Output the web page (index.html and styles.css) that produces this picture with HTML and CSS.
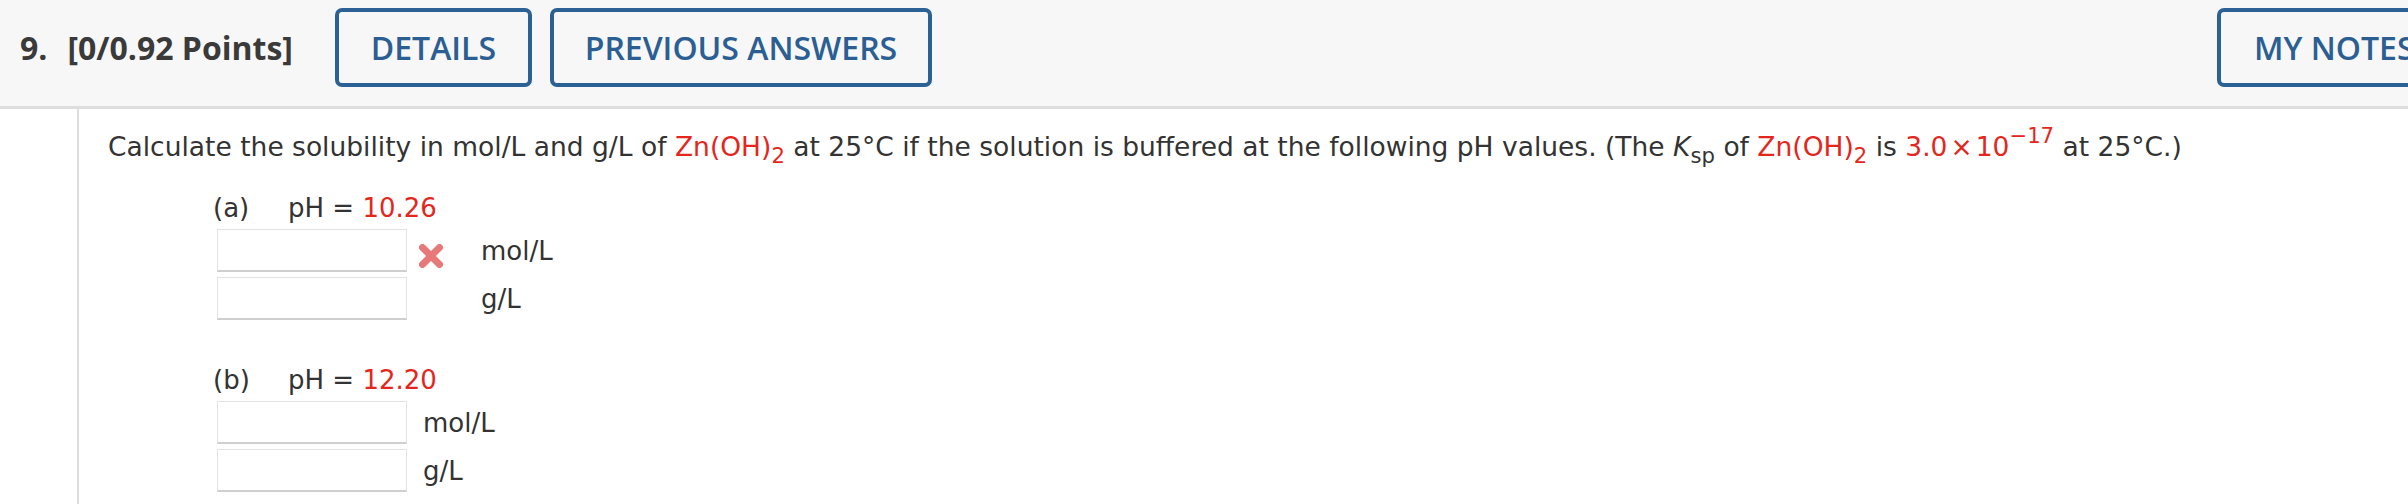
FILE: index.html
```html
<!DOCTYPE html>
<html>
<head>
<meta charset="utf-8">
<link rel="stylesheet" href="styles.css">
</head>
<body>
<header class="qhead">
  <span class="qnum">9.</span>
  <span class="pts">[0/0.92 Points]</span>
  <button class="btn btn-details">DETAILS</button>
  <button class="btn btn-prev">PREVIOUS ANSWERS</button>
  <span class="spacer"></span>
  <button class="btn btn-notes">MY NOTES</button>
</header>
<main class="qbody">
  <p class="prompt">Calculate the solubility in mol/L and g/L of <span class="red">Zn(OH)<sub>2</sub></span> at 25°C if the solution is buffered at the following pH values. (The <i>K</i><sub class="dk">sp</sub> of <span class="red">Zn(OH)<sub>2</sub></span> is <span class="red">3.0<span class="times">×</span>10<sup>−17</sup></span> at 25°C.)</p>

  <section class="part part-a">
    <div class="plabel"><span class="pl">(a)</span><span>pH = <span class="red">10.26</span></span></div>
    <div class="row">
      <span class="inp"></span>
      <span class="mark">
        <svg width="26" height="26" viewBox="0 0 26 26"><g stroke="#e7797a" stroke-width="7" stroke-linecap="round"><line x1="4.5" y1="4.5" x2="21.5" y2="21.5"/><line x1="21.5" y1="4.5" x2="4.5" y2="21.5"/></g></svg>
      </span>
      <span class="unit">mol/L</span>
    </div>
    <div class="row">
      <span class="inp"></span>
      <span class="mark"></span>
      <span class="unit">g/L</span>
    </div>
  </section>

  <section class="part part-b">
    <div class="plabel"><span class="pl">(b)</span><span>pH = <span class="red">12.20</span></span></div>
    <div class="row">
      <span class="inp"></span>
      <span class="unit unit-b">mol/L</span>
    </div>
    <div class="row">
      <span class="inp"></span>
      <span class="unit unit-b">g/L</span>
    </div>
  </section>
</main>
</body>
</html>
```

FILE: styles.css
```css
html, body {
  margin: 0;
  padding: 0;
  background: #ffffff;
  overflow: hidden;
}
body {
  width: 2408px;
  height: 504px;
}
.qhead {
  display: flex;
  align-items: center;
  height: 95px;
  padding-bottom: 11px;
  background: #f7f7f7;
  border-bottom: 3px solid #dedede;
  padding-left: 20px;
  font-family: "Open Sans", sans-serif;
  white-space: nowrap;
  box-sizing: content-box;
}
.qnum, .pts {
  font-weight: 700;
  font-size: 32px;
  color: #3a3a3a;
}
.qnum {
  margin-right: 20px;
}
.pts {
  margin-right: 42px;
}
.btn {
  font-family: "Open Sans", sans-serif;
  font-weight: 600;
  font-size: 32px;
  color: #2b5f93;
  background: transparent;
  border: 4px solid #2c6196;
  border-radius: 7px;
  height: 79px;
  padding: 0;
  box-sizing: border-box;
  text-align: center;
  flex: none;
}
.btn-details {
  width: 197px;
  margin-right: 18px;
}
.btn-prev {
  width: 382px;
}
.spacer {
  flex: 1;
}
.btn-notes {
  width: 240px;
  text-align: left;
  padding-left: 33px;
  margin-right: -49px;
}
.qbody {
  margin-left: 77px;
  border-left: 2px solid #dddddd;
  padding-left: 29px;
  padding-top: 18px;
  height: 400px;
  font-family: "DejaVu Sans", Verdana, sans-serif;
  color: #333333;
  font-size: 26px;
}
.prompt {
  margin: 0;
  line-height: 40px;
  font-size: 26.5px;
  white-space: nowrap;
}
.red {
  color: #e4261c;
}
sub, sup {
  font-size: 0.8em;
  line-height: 0;
}
sub {
  vertical-align: -0.35em;
}
sup {
  vertical-align: 0.6em;
}
.times {
  margin: 0 3px;
}
.part {
  margin-left: 105px;
}
.part-a {
  margin-top: 26px;
}
.part-b {
  margin-top: 45px;
}
.plabel {
  display: flex;
  line-height: 30px;
  height: 30px;
}
.pl {
  width: 75px;
}
.row {
  display: flex;
  align-items: center;
  height: 43px;
  margin-top: 5px;
}
.plabel + .row {
  margin-top: 6px;
}
.inp {
  width: 190px;
  height: 43px;
  box-sizing: border-box;
  border: 1px solid #e3e3e3;
  border-bottom: 2px solid #cfcfcf;
  background: #fff;
  margin-left: 4px;
}
.mark {
  width: 26px;
  height: 26px;
  margin-left: 11px;
  margin-right: 37px;
  margin-top: 10px;
  display: flex;
}
.mark svg {
  filter: blur(0.5px);
}
.unit {
  line-height: 30px;
}
.unit-b {
  margin-left: 16px;
}
```
